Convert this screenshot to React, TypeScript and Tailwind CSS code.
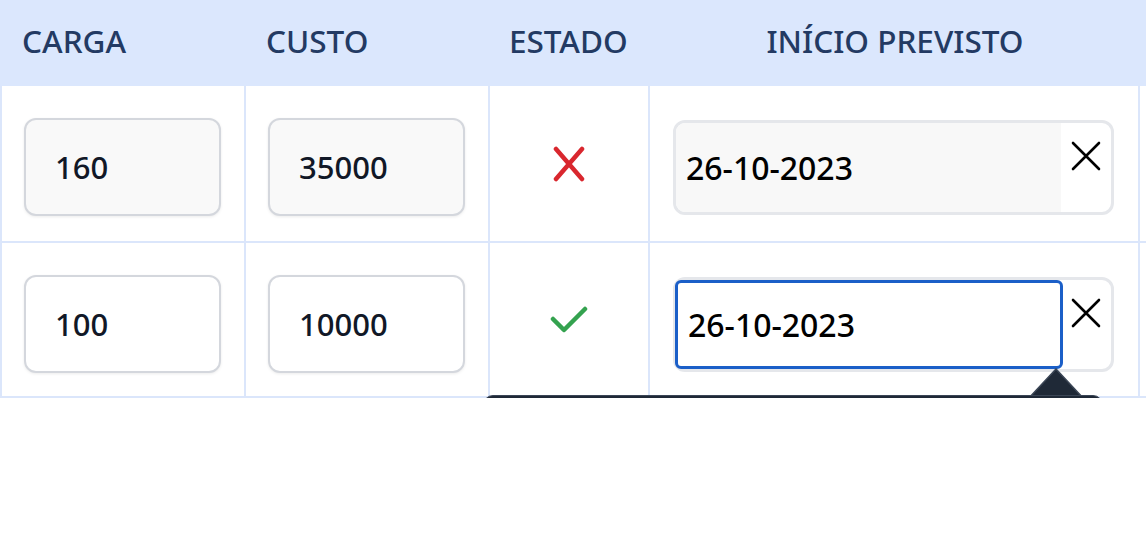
const FONT = "font-['Noto_Sans',_'Open_Sans',_sans-serif]"

type Row = {
  carga: string
  custo: string
  ok: boolean
  inicio: string
  focused: boolean
}

const rows: Row[] = [
  { carga: '160', custo: '35000', ok: false, inicio: '26-10-2023', focused: false },
  { carga: '100', custo: '10000', ok: true, inicio: '26-10-2023', focused: true },
]

function NumberBox({ value, muted }: { value: string; muted: boolean }) {
  return (
    <div
      className={`flex h-[98px] w-[197px] items-center rounded-[12px] border-2 border-[#d4d7dd] pl-[29px] text-[31px] font-medium text-[#111827] shadow-[0_1px_3px_rgba(0,0,0,0.08)] ${
        muted ? 'bg-[#f9f9f9]' : 'bg-white'
      }`}
    >
      {value}
    </div>
  )
}

function CloseGlyph() {
  return (
    <svg width="30" height="30" viewBox="0 0 30 30" fill="none">
      <path d="M2 2 L28 28 M28 2 L2 28" stroke="#000" strokeWidth="2.6" strokeLinecap="round" />
    </svg>
  )
}

function DateField({ value, focused }: { value: string; focused: boolean }) {
  return (
    <div className="flex h-[95px] w-[441px] rounded-[12px] border-[3px] border-[#e5e7eb] bg-white">
      <div
        className={`flex flex-1 items-center pl-[10px] text-[32px] font-medium text-black ${
          focused
            ? '-ml-[1px] -mr-[2px] rounded-[6px] border-[3px] border-[#1b5fc8] bg-white'
            : 'rounded-l-[9px] bg-[#f8f8f8]'
        }`}
      >
        {value}
      </div>
      <div className="flex w-[50px] items-start justify-center pt-[18px]">
        <CloseGlyph />
      </div>
    </div>
  )
}

function StatusIcon({ ok }: { ok: boolean }) {
  if (ok) {
    return (
      <svg width="38" height="28" viewBox="0 0 38 28" fill="none">
        <path d="M3 13 L14 24 L35 3" stroke="#34a24f" strokeWidth="4.5" strokeLinecap="round" strokeLinejoin="round" />
      </svg>
    )
  }
  return (
    <svg width="32" height="36" viewBox="0 0 32 36" fill="none">
      <path d="M3 3 L29 33 M29 3 L3 33" stroke="#d9272e" strokeWidth="4.5" strokeLinecap="round" />
    </svg>
  )
}

export default function App() {
  return (
    <div className={`${FONT} min-h-[558px] w-[1146px] bg-white`}>
      <div className="relative h-[398px] overflow-hidden">
        {/* Header */}
        <div className="grid h-[86px] grid-cols-[246px_244px_160px_490px_1fr] items-center bg-[#dbe7fd] pb-[5px] text-[31.5px] font-medium text-[#233a63]">
          <div className="pl-[22px]">CARGA</div>
          <div className="pl-[20px]">CUSTO</div>
          <div className="pl-[19px]">ESTADO</div>
          <div className="text-center">INÍCIO PREVISTO</div>
          <div />
        </div>

        {/* Body */}
        {rows.map((row, i) => (
          <div
            key={i}
            className={`grid grid-cols-[246px_244px_160px_490px_1fr] border-b-2 border-[#dbe6fb] ${
              i === 0 ? 'h-[157px]' : 'h-[155px]'
            }`}
          >
            <div className="border-x-2 border-[#dbe6fb] pl-[22px] pt-[32px]">
              <NumberBox value={row.carga} muted={!row.focused} />
            </div>
            <div className="border-r-2 border-[#dbe6fb] pl-[22px] pt-[32px]">
              <NumberBox value={row.custo} muted={!row.focused} />
            </div>
            <div className="flex items-center justify-center border-r-2 border-[#dbe6fb]">
              <StatusIcon ok={row.ok} />
            </div>
            <div className="border-r-2 border-[#dbe6fb] pl-[23px] pt-[34px]">
              <DateField value={row.inicio} focused={row.focused} />
            </div>
            <div />
          </div>
        ))}

        {/* Date picker popover (mostly clipped) */}
        <svg
          className="absolute left-[1027px] top-[368px]"
          width="58"
          height="31"
          viewBox="0 0 58 31"
        >
          <path d="M1 31 L29 1 L57 31 Z" fill="#1f2937" stroke="#3b4656" strokeWidth="1.5" />
        </svg>
        <div className="absolute left-[483px] top-[395px] h-[200px] w-[620px] rounded-[10px] border border-[#3b4656] bg-[#1f2937]" />
      </div>
    </div>
  )
}
